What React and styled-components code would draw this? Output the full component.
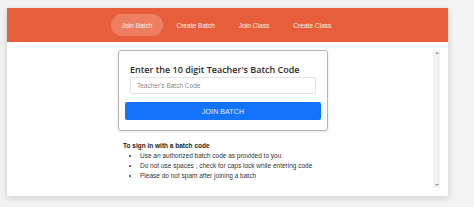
import React from "react";
import styled, { createGlobalStyle } from "styled-components";

const GlobalStyle = createGlobalStyle`
  html, body {
    margin: 0;
    padding: 0;
    background: #f3f3f3;
    font-family: "Liberation Sans", Arial, sans-serif;
  }
`;

const Page = styled.div`
  padding: 8px 26px 11px 7px;
  height: 207px;
  box-sizing: border-box;
`;

const Card = styled.div`
  background: #fff;
  height: 188px;
  box-shadow: 0 2px 7px rgba(0, 0, 0, 0.16);
  display: flex;
  flex-direction: column;
`;

const Header = styled.nav`
  height: 34px;
  background: #e95e3a;
  display: flex;
  align-items: center;
  justify-content: center;
  gap: 2px;
  padding-right: 2px;
`;

const NavItem = styled.a`
  height: 22px;
  display: flex;
  align-items: center;
  padding: 0 11px;
  border-radius: 11px;
  font-size: 6.6px;
  color: #fff3ee;
  background: ${(p) => (p.$active ? "rgba(255, 255, 255, 0.2)" : "transparent")};
`;

const Body = styled.div`
  flex: 1;
  display: flex;
  padding: 8px 8px 8px 0;
`;

const Content = styled.div`
  flex: 1;
  display: flex;
  justify-content: center;
  padding-left: 6px;
`;

const Column = styled.div`
  width: 210px;
`;

const Box = styled.div`
  border: 1px solid #b4b4b4;
  border-radius: 3px;
  box-shadow: 0 1px 3px rgba(0, 0, 0, 0.1);
  padding: 13px 6px 10px;
  display: flex;
  flex-direction: column;
`;

const Title = styled.h3`
  margin: 0 5px;
  font-family: "Open Sans", sans-serif;
  font-weight: 600;
  font-size: 9px;
  line-height: 12px;
  color: #2a2a2a;
`;

const Input = styled.input`
  margin: 1px 5px 0 5px;
  height: 17px;
  box-sizing: border-box;
  border: 1px solid #e4e4e4;
  border-radius: 2px;
  padding: 0 6px;
  font-family: "Liberation Sans", Arial, sans-serif;
  font-size: 6.5px;
  outline: none;
  &::placeholder {
    color: #8a8a8a;
  }
`;

const Button = styled.button`
  margin-top: 8px;
  height: 18px;
  border: none;
  border-radius: 2px;
  background: #1473fb;
  color: #e8f0ff;
  font-family: "Liberation Sans", Arial, sans-serif;
  font-size: 7px;
  letter-spacing: 0.1px;
`;

const Help = styled.div`
  padding: 10px 0 0 5px;
  font-size: 6.5px;
  color: #222;
`;

const HelpTitle = styled.div`
  font-weight: 700;
  line-height: 10px;
`;

const List = styled.ul`
  margin: 0;
  padding-left: 17px;
  line-height: 10px;
  color: #333;
`;

const ScrollTrack = styled.div`
  width: 7px;
  background: #f1f1f1;
  display: flex;
  flex-direction: column;
  justify-content: space-between;
  align-items: center;
  padding: 2px 0;
`;

const Arrow = styled.div`
  width: 0;
  height: 0;
  border-left: 2px solid transparent;
  border-right: 2px solid transparent;
  ${(p) =>
    p.$down
      ? "border-top: 2px solid #9a9a9a;"
      : "border-bottom: 2px solid #9a9a9a;"}
`;

export default function App() {
  return (
    <>
      <GlobalStyle />
      <Page>
        <Card>
          <Header>
            <NavItem $active>Join Batch</NavItem>
            <NavItem>Create Batch</NavItem>
            <NavItem>Join Class</NavItem>
            <NavItem>Create Class</NavItem>
          </Header>
          <Body>
            <Content>
              <Column>
                <Box>
                  <Title>Enter the 10 digit Teacher's Batch Code</Title>
                  <Input placeholder="Teacher's Batch Code" />
                  <Button>JOIN BATCH</Button>
                </Box>
                <Help>
                  <HelpTitle>To sign in with a batch code</HelpTitle>
                  <List>
                    <li>Use an authorized batch code as provided to you</li>
                    <li>Do not use spaces , check for caps lock while entering code</li>
                    <li>Please do not spam after joining a batch</li>
                  </List>
                </Help>
              </Column>
            </Content>
            <ScrollTrack>
              <Arrow />
              <Arrow $down />
            </ScrollTrack>
          </Body>
        </Card>
      </Page>
    </>
  );
}
